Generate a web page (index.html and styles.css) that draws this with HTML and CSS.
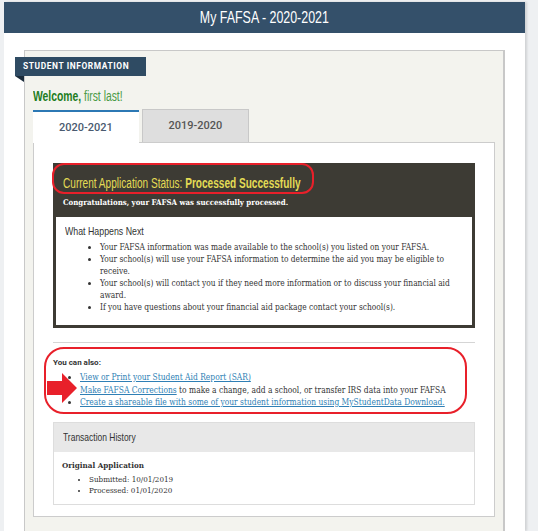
FILE: index.html
```html
<!DOCTYPE html>
<html lang="en">
<head>
  <meta charset="UTF-8">
  <title>My FAFSA - 2020-2021</title>
  <link rel="stylesheet" href="styles.css">
</head>
<body>
  <div class="page">
    <div class="title-bar"><span class="narrow">My FAFSA - 2020-2021</span></div>

    <div class="content">
      <div class="panel">
        <div class="ribbon">Student Information</div>
        <p class="welcome"><span class="narrow"><strong>Welcome,</strong> first last!</span></p>

        <div class="tabs">
          <div class="tab active">2020-2021</div>
          <div class="tab">2019-2020</div>
        </div>

        <div class="tab-body">
          <div class="status">
            <span class="mark mark-status"></span>
            <h3><span class="narrow">Current Application Status: <strong>Processed Successfully</strong></span></h3>
            <p class="congrats">Congratulations, your FAFSA was successfully processed.</p>
            <div class="next">
              <h4><span class="narrow">What Happens Next</span></h4>
              <ul>
                <li>Your FAFSA information was made available to the school(s) you listed on your FAFSA.</li>
                <li>Your school(s) will use your FAFSA information to determine the aid you may be eligible to receive.</li>
                <li>Your school(s) will contact you if they need more information or to discuss your financial aid award.</li>
                <li>If you have questions about your financial aid package contact your school(s).</li>
              </ul>
            </div>
          </div>

          <hr>

          <div class="also">
            <span class="mark mark-also"></span>
            <svg class="arrow" width="30" height="30" viewBox="0 0 30 30">
              <polygon points="0,8 15,8 15,0 30,15 15,30 15,22 0,22" fill="#e8202a"/>
            </svg>
            <p class="also-title">You can also:</p>
            <ul>
              <li><a href="#">View or Print your Student Aid Report (SAR)</a></li>
              <li><a href="#">Make FAFSA Corrections</a> to make a change, add a school, or transfer IRS data into your FAFSA</li>
              <li><a href="#">Create a shareable file with some of your student information using MyStudentData Download.</a></li>
            </ul>
          </div>

          <div class="history">
            <div class="history-head"><span class="narrow">Transaction History</span></div>
            <div class="history-body">
              <h5>Original Application</h5>
              <ul>
                <li>Submitted: 10/01/2019</li>
                <li>Processed: 01/01/2020</li>
              </ul>
            </div>
          </div>
        </div>
      </div>
    </div>
  </div>
</body>
</html>
```

FILE: styles.css
```css
body {
  margin: 0;
  background-color: #eef0f2;
  font-family: 'DejaVu Serif Condensed', 'DejaVu Serif', serif;
  color: #333;
  overflow: hidden;
}

.narrow {
  display: inline-block;
  transform: scaleX(0.73);
  transform-origin: left center;
  white-space: nowrap;
}

.page {
  background: white;
  width: 521px;
  height: 529px;
  margin: 2px 0 0 4px;
  box-shadow: 2px 0 2px rgba(0, 0, 0, 0.12);
  display: flex;
  flex-direction: column;
  overflow: hidden;
}

.title-bar {
  background-color: #34506a;
  color: white;
  height: 31px;
  line-height: 31px;
  text-align: center;
  font-family: 'Liberation Sans', sans-serif;
  font-size: 17px;
}

.title-bar .narrow {
  transform-origin: center center;
}

.content {
  flex: 1;
  display: flex;
  flex-direction: column;
  padding: 17px 20px 0 20px;
}

.panel {
  flex: 1;
  background-color: #f3f3ee;
  border: 1px solid #c8c8c8;
  border-right-width: 2px;
  border-bottom: none;
  padding: 6px 8px 0 8px;
}

.ribbon {
  position: relative;
  width: max-content;
  margin-left: -18px;
  background-color: #2f4b63;
  color: white;
  font-family: Roboto, sans-serif;
  font-weight: bold;
  font-size: 8.4px;
  letter-spacing: 0.6px;
  text-transform: uppercase;
  height: 19px;
  line-height: 19px;
  padding: 0 17px 0 8px;
}

.ribbon:after {
  content: "";
  position: absolute;
  left: 0;
  top: 19px;
  border-top: 6px solid #1b2c3b;
  border-left: 9px solid transparent;
}

.welcome {
  margin: 10px 0 3px 0;
  font-family: 'Liberation Sans', sans-serif;
  font-size: 14px;
  line-height: 20px;
  height: 20px;
  color: #4a9a45;
}

.welcome .narrow {
  transform: scaleX(0.74);
}

.welcome strong {
  color: #1e7d1e;
}

.tabs {
  display: flex;
  gap: 3px;
}

.tab {
  width: 105px;
  height: 32px;
  line-height: 32px;
  text-align: center;
  font-family: Roboto, sans-serif;
  font-size: 11px;
  font-weight: 500;
  color: #555;
  background-color: #dedede;
  border: 1px solid #c8c8c8;
  border-bottom: none;
}

.tab.active {
  position: relative;
  top: 1px;
  width: 106px;
  height: 31px;
  background: white;
  color: #4a5a70;
  border: none;
  border-top: 2px solid #2c78b4;
}

.tab-body {
  background: white;
  border: 1px solid #cccccc;
  padding: 20px 19px 0 19px;
  height: 353px;
}

.status {
  position: relative;
  background-color: #3d3b34;
  padding: 0 3px 3px 3px;
}

.status h3 {
  margin: 0;
  padding: 12px 0 0 7px;
  font-family: 'Liberation Sans', sans-serif;
  font-weight: normal;
  font-size: 14px;
  line-height: 16px;
  color: #e4dc55;
}

.status h3 .narrow {
  transform: scaleX(0.72);
}

.congrats {
  margin: 0;
  padding: 6px 0 8px 7px;
  font-size: 7.8px;
  font-weight: bold;
  line-height: 12px;
  color: white;
}

.next {
  background: white;
  padding: 8px 9px 12px 9px;
}

.next h4 {
  margin: 0 0 3px 0;
  font-family: 'Liberation Sans', sans-serif;
  font-weight: normal;
  font-size: 11px;
  line-height: 13px;
  color: #333;
}

.next h4 .narrow {
  transform: scaleX(0.8);
}

ul {
  margin: 0;
  padding-left: 35px;
  font-size: 8.3px;
  line-height: 12px;
  color: #333;
}

.mark {
  position: absolute;
  border: 2px solid #e8202a;
  pointer-events: none;
}

.mark-status {
  left: -1px;
  top: 0;
  width: 258px;
  height: 27px;
  border-radius: 12px;
}

hr {
  margin: 14px 0 0 0;
  border: none;
  border-top: 1px solid #d5d5d5;
}

.also {
  position: relative;
  padding: 14px 0 9px 0;
}

.mark-also {
  left: -9px;
  top: 4px;
  width: 419px;
  height: 63px;
  border-radius: 20px;
}

.arrow {
  position: absolute;
  left: -6px;
  top: 30px;
}

.also-title {
  margin: 0 0 3px 0;
  font-family: Roboto, sans-serif;
  font-weight: bold;
  font-size: 8px;
  line-height: 11px;
  color: #333;
}

.also ul {
  padding-left: 27px;
  font-size: 8.4px;
  line-height: 12.5px;
}

a {
  color: #2f7fb5;
}

.history {
  margin-top: 4px;
  border: 1px solid #dddddd;
}

.history-head {
  background-color: #e8e8e8;
  height: 29px;
  line-height: 29px;
  padding-left: 9px;
  font-family: 'Liberation Sans', sans-serif;
  font-size: 11px;
  color: #333;
}

.history-head .narrow {
  transform: scaleX(0.77);
}

.history-body {
  padding: 7px 8px 7px 8px;
}

.history h5 {
  margin: 0 0 3px 0;
  font-size: 8px;
  line-height: 12px;
  color: #333;
}

.history ul {
  padding-left: 27px;
  font-size: 8px;
  line-height: 11.5px;
}
```
